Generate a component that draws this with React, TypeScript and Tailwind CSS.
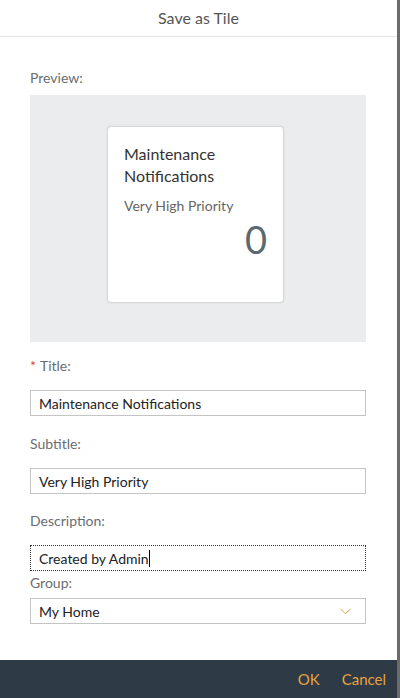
import { ChevronDown } from 'lucide-react';

function Field({ label, value, required, focused, caret }: { label: string; value: string; required?: boolean; focused?: boolean; caret?: boolean }) {
  return (
    <div>
      <div className="text-[14px] text-[#6a6d70] h-[20px] leading-[20px]">
        {required && <span className="text-[#d04343] mr-[4px]">*</span>}
        {label}
      </div>
      <div
        className={
          'mt-[14px] h-[26px] bg-white px-[8px] flex items-center text-[14px] text-[#222] ' +
          (focused ? 'border border-dotted border-[#333]' : 'border border-[#c4c4c4]')
        }
      >
        {value}
        {caret && <span className="inline-block w-[1px] h-[17px] bg-black" />}
      </div>
    </div>
  );
}

export default function App() {
  return (
    <div className="w-[400px] h-[698px] flex bg-[#6b6b6b] font-['Lato',sans-serif]">
      <div className="w-[397px] h-full bg-white flex flex-col">
        {/* header */}
        <div className="h-[37px] border-b border-[#e5e5e5] flex items-center justify-center text-[16px] text-[#555]">
          Save as Tile
        </div>

        <div className="flex-1 px-[30px] pr-[31px]">
          <div className="mt-[31px] text-[14px] text-[#6a6d70] h-[20px] leading-[20px]">Preview:</div>
          <div className="mt-[7px] h-[247px] bg-[#ebecee] flex items-start pl-[77px] pt-[31px]">
            <div className="w-[177px] h-[177px] bg-white rounded-[4px] border border-[#d9d9d9] shadow-[0_0_2px_rgba(0,0,0,0.1)] px-[16px] pt-[16px] flex flex-col">
              <div className="text-[16px] leading-[22px] text-[#333]">
                Maintenance
                <br />
                Notifications
              </div>
              <div className="mt-[8px] text-[14px] text-[#666]">Very High Priority</div>
              <div className="self-end text-[38px] leading-[38px] text-[#5b6872] mt-[4px]">0</div>
            </div>
          </div>

          <div className="mt-[14px]">
            <Field label="Title:" value="Maintenance Notifications" required />
          </div>
          <div className="mt-[18px]">
            <Field label="Subtitle:" value="Very High Priority" />
          </div>
          <div className="mt-[17px]">
            <Field label="Description:" value="Created by Admin" focused caret />
          </div>
          <div className="mt-[2px]">
            <div className="text-[14px] text-[#6a6d70] h-[20px] leading-[20px]">Group:</div>
            <div className="mt-[5px] h-[26px] border border-[#c4c4c4] bg-white pl-[8px] pr-[10px] flex items-center justify-between text-[14px] text-[#222]">
              My Home
              <ChevronDown size={19} strokeWidth={1.2} className="text-[#e09a3a]" />
            </div>
          </div>
        </div>

        {/* footer */}
        <div className="h-[38px] bg-[#2e3b47] flex items-center justify-end gap-[22px] pr-[11px] text-[15px] text-[#e9a23b]">
          <span>OK</span>
          <span>Cancel</span>
        </div>
      </div>
    </div>
  );
}
